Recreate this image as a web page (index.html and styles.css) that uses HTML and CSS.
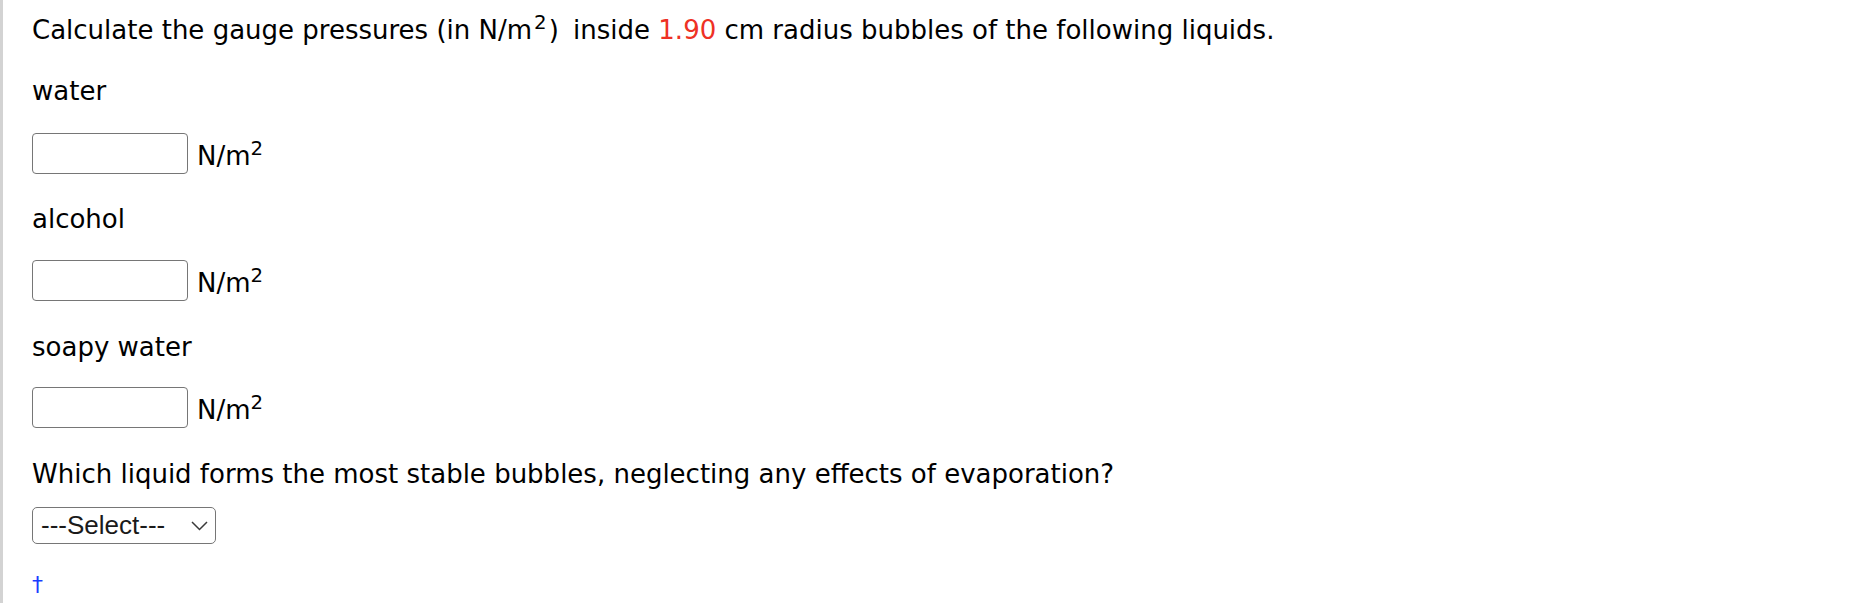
FILE: index.html
```html
<!DOCTYPE html>
<html>
<head>
<meta charset="utf-8">
<link rel="stylesheet" href="styles.css">
</head>
<body>
<div class="question">
  <p class="line prompt">Calculate the gauge pressures (in N/m<sup class="psup">2</sup><span class="paren">)</span> inside <span class="red">1.90</span> cm radius bubbles of the following liquids.</p>

  <p class="line label first">water</p>
  <div class="row r1"><span class="box"></span><span class="unit">N/m<sup>2</sup></span></div>

  <p class="line label l2">alcohol</p>
  <div class="row r2"><span class="box"></span><span class="unit">N/m<sup>2</sup></span></div>

  <p class="line label l3">soapy water</p>
  <div class="row r3"><span class="box"></span><span class="unit">N/m<sup>2</sup></span></div>

  <p class="line which">Which liquid forms the most stable bubbles, neglecting any effects of evaporation?</p>

  <div class="select"><span class="sel-text">---Select---</span><svg class="chev" width="17" height="10" viewBox="0 0 17 10"><path d="M1 1 L8.5 8.5 L16 1" fill="none" stroke="#3a3a3a" stroke-width="1.5"/></svg></div>

  <p class="line dagger">&dagger;</p>
</div>
</body>
</html>
```

FILE: styles.css
```css
html, body {
  margin: 0;
  padding: 0;
  background: #fff;
}
.question {
  border-left: 3px solid #d3d3d3;
  padding: 12px 0 0 29px;
  min-height: 603px;
  box-sizing: border-box;
  font-family: "DejaVu Sans", Verdana, sans-serif;
  font-size: 26px;
  color: #000;
}
.line {
  margin: 0;
  line-height: 36px;
  white-space: nowrap;
}
sup {
  font-size: 0.76em;
  line-height: 0;
  vertical-align: 0.5em;
}
.psup {
  margin: 0 2px 0 2px;
}
.paren {
  margin-right: 6px;
}
.red {
  color: #ee3124;
}
.first { margin-top: 25px; }
.l2 { margin-top: 27px; }
.l3 { margin-top: 28px; }
.row {
  display: flex;
  align-items: center;
  height: 41px;
}
.r1 { margin-top: 24px; }
.r2 { margin-top: 23px; }
.r3 { margin-top: 22px; }
.box {
  width: 156px;
  height: 41px;
  box-sizing: border-box;
  border: 1.5px solid #767676;
  border-radius: 4px;
  background: #fff;
}
.unit {
  margin-left: 9px;
  line-height: 36px;
  position: relative;
  top: 2px;
}
.which { margin-top: 28px; }
.select {
  margin-top: 15px;
  width: 184px;
  height: 37px;
  box-sizing: border-box;
  border: 1.5px solid #767676;
  border-radius: 5px;
  display: flex;
  align-items: center;
  justify-content: space-between;
  padding: 0 7px 0 8px;
  font-family: "Liberation Sans", Arial, sans-serif;
  font-size: 26px;
  color: #1a1a1a;
}
.chev { display: block; }
.dagger {
  margin-top: 23px;
  color: #1a3cff;
  font-size: 22px;
}
```
